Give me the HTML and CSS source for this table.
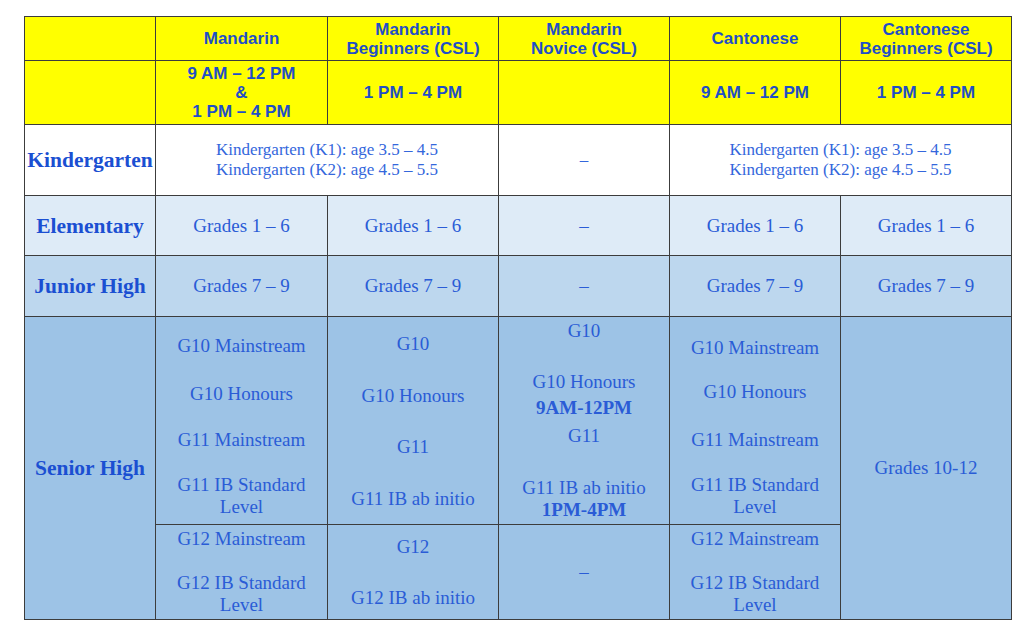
FILE: index.html
```html
<!DOCTYPE html>
<html lang="en">
<head>
<meta charset="utf-8">
<title>Program schedule</title>
<link rel="stylesheet" href="styles.css">
</head>
<body>
<table class="sched">
  <colgroup>
    <col class="c-level">
    <col class="c-w1">
    <col class="c-w">
    <col class="c-w">
    <col class="c-w">
    <col class="c-w">
  </colgroup>
  <tr class="r-head1 hd">
    <td></td>
    <td>Mandarin</td>
    <td>Mandarin<br>Beginners (CSL)</td>
    <td>Mandarin<br>Novice (CSL)</td>
    <td>Cantonese</td>
    <td>Cantonese<br>Beginners (CSL)</td>
  </tr>
  <tr class="r-head2 hd">
    <td></td>
    <td>9 AM – 12 PM<br>&amp;<br>1 PM – 4 PM</td>
    <td>1 PM – 4 PM</td>
    <td></td>
    <td>9 AM – 12 PM</td>
    <td>1 PM – 4 PM</td>
  </tr>
  <tr class="r-kg">
    <th>Kindergarten</th>
    <td colspan="2" class="kg">Kindergarten (K1): age 3.5 – 4.5<br>Kindergarten (K2): age 4.5 – 5.5</td>
    <td class="kg">–</td>
    <td colspan="2" class="kg">Kindergarten (K1): age 3.5 – 4.5<br>Kindergarten (K2): age 4.5 – 5.5</td>
  </tr>
  <tr class="r-elem">
    <th>Elementary</th>
    <td>Grades 1 – 6</td>
    <td>Grades 1 – 6</td>
    <td>–</td>
    <td>Grades 1 – 6</td>
    <td>Grades 1 – 6</td>
  </tr>
  <tr class="r-jr">
    <th>Junior High</th>
    <td>Grades 7 – 9</td>
    <td>Grades 7 – 9</td>
    <td>–</td>
    <td>Grades 7 – 9</td>
    <td>Grades 7 – 9</td>
  </tr>
  <tr class="r-sr r-g10">
    <th rowspan="3">Senior High</th>
    <td class="sp26"><p>G10 Mainstream</p><p>G10 Honours</p></td>
    <td class="sp30"><p>G10</p><p>G10 Honours</p></td>
    <td class="sp29"><p>G10</p><p>G10 Honours</p><p class="bold b-up">9AM-12PM</p></td>
    <td class="sp22"><p>G10 Mainstream</p><p>G10 Honours</p></td>
    <td rowspan="3">Grades 10-12</td>
  </tr>
  <tr class="r-sr r-g11">
    <td class="sp23"><p>G11 Mainstream</p><p>G11 IB Standard<br>Level</p></td>
    <td class="sp30"><p>G11</p><p>G11 IB ab initio</p></td>
    <td class="sp30"><p>G11</p><p>G11 IB ab initio</p><p class="bold">1PM-4PM</p></td>
    <td class="sp23"><p>G11 Mainstream</p><p>G11 IB Standard<br>Level</p></td>
  </tr>
  <tr class="r-sr r-g12">
    <td class="sp22"><p>G12 Mainstream</p><p>G12 IB Standard<br>Level</p></td>
    <td class="sp29"><p>G12</p><p>G12 IB ab initio</p></td>
    <td>–</td>
    <td class="sp22"><p>G12 Mainstream</p><p>G12 IB Standard<br>Level</p></td>
  </tr>
</table>
</body>
</html>
```

FILE: styles.css
```css
html, body {
  margin: 0;
  padding: 0;
  background: #ffffff;
}

body {
  padding: 16px 0 0 24px;
}

.sched {
  border-collapse: collapse;
  table-layout: fixed;
  width: 988px;
  font-family: "Liberation Serif", "Times New Roman", serif;
  color: #2a5cd6;
}

.c-level { width: 131px; }
.c-w1 { width: 172px; }
.c-w { width: 171px; }

.sched td,
.sched th {
  border: 1px solid #3c3c3c;
  padding: 0;
  text-align: center;
  vertical-align: middle;
  font-size: 19px;
  line-height: 22px;
  font-weight: normal;
}

.sched th {
  font-weight: bold;
  font-size: 21.5px;
  color: #1b4fd2;
}

.sched p {
  margin: 0;
}

.hd td {
  background: #ffff00;
  font-family: "Liberation Sans", Arial, sans-serif;
  font-weight: bold;
  font-size: 17px;
  line-height: 19px;
  color: #1f4fc6;
}

.r-head1 { height: 44px; }
.r-head2 { height: 64px; }

.r-kg { height: 71px; background: #ffffff; }
.r-kg .kg {
  font-size: 17px;
  line-height: 20px;
  color: #3467dc;
}

.r-elem { height: 60px; background: #deebf7; }
.r-jr { height: 61px; background: #bdd7ee; }

.r-sr { background: #9dc3e6; }
.r-g10 { height: 106px; }
.r-g11 { height: 102px; }
.r-g12 { height: 95px; }

.r-g10 td { border-bottom-style: hidden; }
.r-g11 td { border-top-style: hidden; }
.r-g10 td[rowspan] { border-bottom-style: solid; }

.sp22 p + p { margin-top: 22px; }
.sp23 p + p { margin-top: 23px; }
.sp26 p + p { margin-top: 26px; }
.sp29 p + p { margin-top: 29px; }
.sp30 p + p { margin-top: 30px; }

.sched p.bold {
  font-weight: bold;
  margin-top: 0;
}
.sched p.b-up {
  margin-top: 4px;
}
```
